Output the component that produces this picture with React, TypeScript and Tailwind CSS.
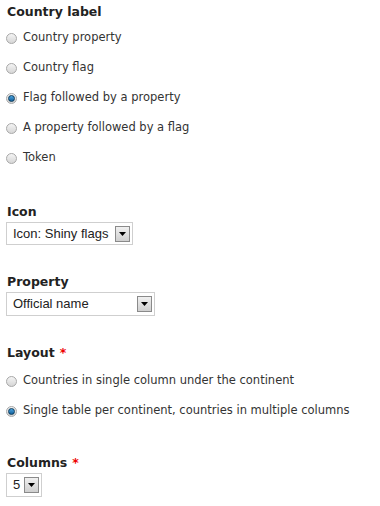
import React from "react";

const font = { fontFamily: '"DejaVu Sans", Verdana, sans-serif' };

function Radio({ checked }: { checked?: boolean }) {
  return (
    <span className="relative inline-flex h-[11px] w-[11px] shrink-0 items-center justify-center rounded-full border border-[#a8a8a8] bg-gradient-to-b from-[#f4f4f4] to-[#d6d6d6]">
      {checked && (
        <span className="h-[7px] w-[7px] rounded-full border border-[#0b3a5a] bg-gradient-to-b from-[#4aa3e0] to-[#10609a]" />
      )}
    </span>
  );
}

function RadioRow({ label, checked }: { label: string; checked?: boolean }) {
  return (
    <div className="flex h-[30px] items-center gap-[6px] pl-[6px]">
      <Radio checked={checked} />
      <span className="text-[11.5px] text-[#333]">{label}</span>
    </div>
  );
}

function Heading({ children, req }: { children: React.ReactNode; req?: boolean }) {
  return (
    <div className="flex h-[16px] items-center pl-[7px] text-[12.5px] font-bold leading-[16px] text-[#222]">
      {children}
      {req && <span className="ml-[5px] text-[#e00]">*</span>}
    </div>
  );
}

function Select({ value, width, height }: { value: string; width: number; height: number }) {
  return (
    <div
      className="ml-[6px] flex items-center justify-between border border-[#cfcfcf] bg-white pl-[6px] pr-[2px]"
      style={{ width, height }}
    >
      <span className="text-[13px] text-[#222]" style={{ fontFamily: '"Liberation Sans", Arial, sans-serif' }}>
        {value}
      </span>
      <span className="flex h-[16px] w-[15px] items-center justify-center border border-[#8a8a8a] bg-gradient-to-b from-[#f0f0f0] to-[#cfcfcf]">
        <svg width="7" height="4" viewBox="0 0 7 4">
          <polygon points="0,0 7,0 3.5,4" fill="#000" />
        </svg>
      </span>
    </div>
  );
}

export default function App() {
  return (
    <div className="h-[506px] w-[380px] bg-white" style={font}>
      <div className="pt-[4px]">
        <Heading>Country label</Heading>
        <div className="mt-[3px]">
          <RadioRow label="Country property" />
          <RadioRow label="Country flag" />
          <RadioRow label="Flag followed by a property" checked />
          <RadioRow label="A property followed by a flag" />
          <RadioRow label="Token" />
        </div>
        <div className="mt-[31px]">
          <Heading>Icon</Heading>
          <div className="mt-[2px]">
            <Select value="Icon: Shiny flags" width={127} height={23} />
          </div>
        </div>
        <div className="mt-[29px]">
          <Heading>Property</Heading>
          <div className="mt-[2px]">
            <Select value="Official name" width={149} height={24} />
          </div>
        </div>
        <div className="mt-[29px]">
          <Heading req>Layout</Heading>
          <div className="mt-[5px]">
            <RadioRow label="Countries in single column under the continent" />
            <RadioRow label="Single table per continent, countries in multiple columns" checked />
          </div>
        </div>
        <div className="mt-[29px]">
          <Heading req>Columns</Heading>
          <div className="mt-[2px]">
            <Select value="5" width={36} height={24} />
          </div>
        </div>
      </div>
    </div>
  );
}
